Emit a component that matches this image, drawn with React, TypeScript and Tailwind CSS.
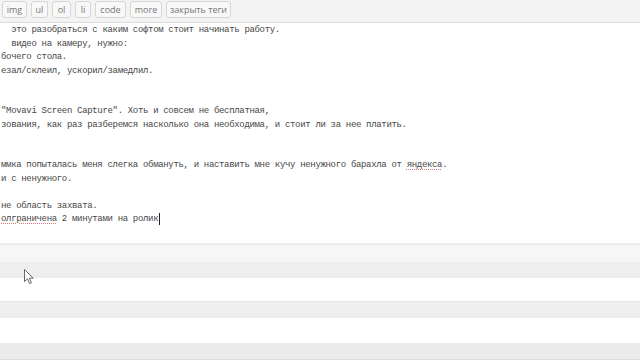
import React from 'react';

const buttons = [
  { label: 'img', w: 'w-[25px]' },
  { label: 'ul', w: 'w-[17px]' },
  { label: 'ol', w: 'w-[19px]' },
  { label: 'li', w: 'w-[16px]' },
  { label: 'code', w: 'w-[31px]' },
  { label: 'more', w: 'w-[32px]' },
  { label: 'закрыть теги', w: 'w-[65px]' },
];

const spell = 'underline decoration-dotted decoration-[#e07a7a] decoration-1 underline-offset-[2px]';

const lines: React.ReactNode[] = [
  '  это разобраться с каким софтом стоит начинать работу.',
  '  видео на камеру, нужно:',
  'бочего стола.',
  'езал/склеил, ускорил/замедлил.',
  '',
  '',
  '"Movavi Screen Capture". Хоть и совсем не бесплатная,',
  'зования, как раз разберемся насколько она необходима, и стоит ли за нее платить.',
  '',
  '',
  <>
    ммка попыталась меня слегка обмануть, и наставить мне кучу ненужного барахла от{' '}
    <span className={spell}>яндекса</span>.
  </>,
  'и с ненужного.',
  '',
  'не область захвата.',
  <>
    <span className={spell}>олграничена</span> 2 минутами на ролик
    <span className="inline-block w-px h-[12px] bg-[#222] align-middle ml-px" />
  </>,
];

function Cursor() {
  return (
    <svg className="absolute left-[24px] top-[269px]" width="10" height="16" viewBox="0 0 10 16">
      <path d="M0.5 0.5 L0.5 12.5 L3.5 9.8 L5.6 14.6 L7.4 13.8 L5.4 9.2 L9.2 9.2 Z" fill="#fff" stroke="#666" strokeWidth="1" />
    </svg>
  );
}

export default function App() {
  return (
    <div className="relative w-[640px] h-[360px] overflow-hidden bg-white">
      <div className="h-[23px] bg-[#f3f3f3] border-b border-[#dcdcdc] flex items-start gap-[4px] pl-[2px] pt-[1px]">
        {buttons.map(b => (
          <div
            key={b.label}
            className={`${b.w} h-[17px] flex items-center justify-center rounded-[3px] border border-[#d6d6d6] bg-[#f8f8f8] text-[9px] text-[#777] font-['Open_Sans',sans-serif] whitespace-nowrap`}
          >
            {b.label}
          </div>
        ))}
      </div>

      <div className="h-[220px] pt-[1px] pl-[1px] font-['Liberation_Mono',monospace] text-[9px] tracking-[-0.33px] text-[#474747]">
        {lines.map((l, i) => (
          <div key={i} className="h-[13.5px] leading-[13.5px] whitespace-pre">
            {l}
          </div>
        ))}
      </div>

      <div className="h-px bg-[#f0f0f0]" />
      <div className="h-[18px] bg-[#f6f6f6] border-t border-[#ebebeb]" />
      <div className="h-[16px] bg-[#eeeeee]" />
      <div className="h-[23px] bg-white" />
      <div className="h-[17px] bg-[#eeeeee] border-t border-[#e6e6e6]" />
      <div className="h-[25px] bg-white" />
      <div className="h-[17px] bg-[#ececec] border-b border-[#dedede]" />

      <Cursor />
    </div>
  );
}
